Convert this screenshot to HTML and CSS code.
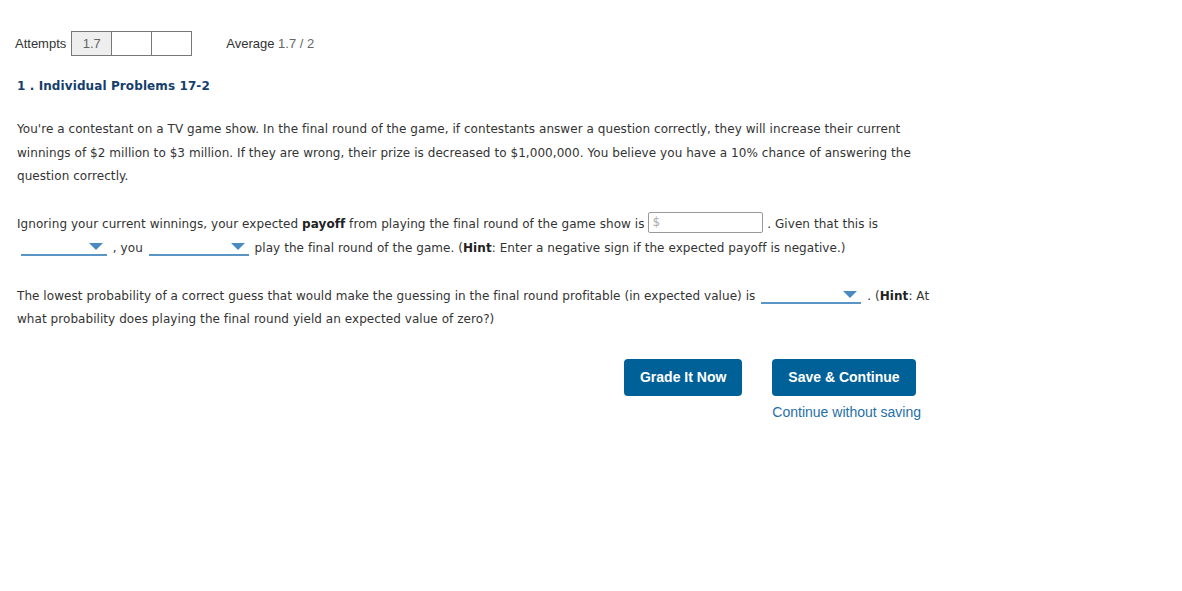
FILE: index.html
```html
<!DOCTYPE html>
<html lang="en">
<head>
  <meta charset="utf-8">
  <title>Individual Problems 17-2</title>
  <link rel="stylesheet" href="styles.css">
</head>
<body>
  <div class="page">
    <div class="attempts">
      <span class="attempts-label">Attempts</span>
      <span class="attempt-boxes">
        <span class="attempt attempt--filled">1.7</span>
        <span class="attempt"></span>
        <span class="attempt"></span>
      </span>
      <span class="average">Average <span class="average-value">1.7 / 2</span></span>
    </div>

    <h2 class="question-title">1 . Individual Problems 17-2</h2>

    <div class="question">
      <p>You're a contestant on a TV game show. In the final round of the game, if contestants answer a question correctly, they will increase their current winnings of $2 million to $3 million. If they are wrong, their prize is decreased to $1,000,000. You believe you have a 10% chance of answering the question correctly.</p>

      <p>Ignoring your current winnings, your expected <strong>payoff</strong> from playing the final round of the game show is <span class="money"><span class="money-sign">$</span></span> . Given that this is <span class="select select--short"><span class="arrow"></span></span> , you <span class="select select--mid"><span class="arrow"></span></span> play the final round of the game. (<strong>Hint</strong>: Enter a negative sign if the expected payoff is negative.)</p>

      <p>The lowest probability of a correct guess that would make the guessing in the final round profitable (in expected value) is <span class="select select--mid"><span class="arrow"></span></span> . (<strong>Hint</strong>: At what probability does playing the final round yield an expected value of zero?)</p>
    </div>

    <div class="actions">
      <button class="btn">Grade It Now</button>
      <div class="save">
        <button class="btn">Save &amp; Continue</button>
        <a class="link" href="#">Continue without saving</a>
      </div>
    </div>
  </div>
</body>
</html>
```

FILE: styles.css
```css
*, *::before, *::after {
  box-sizing: border-box;
}
body {
  margin: 0;
  background: #fff;
  color: #333;
  font-family: "DejaVu Sans", Verdana, sans-serif;
}
.page {
  width: 940px;
  padding: 31px 0 0 15px;
}

/* Attempts row */
.attempts {
  display: flex;
  align-items: center;
  font-family: "Liberation Sans", Arial, sans-serif;
  font-size: 13px;
}
.attempts-label {
  color: #333;
  margin-right: 5px;
}
.attempt-boxes {
  display: flex;
}
.attempt {
  width: 41px;
  height: 25px;
  border: 1px solid #777;
  margin-left: -1px;
  display: flex;
  align-items: center;
  justify-content: center;
  color: #666;
  font-size: 13px;
}
.attempt:first-child {
  margin-left: 0;
}
.attempt--filled {
  background: #eee;
}
.average {
  margin-left: 34px;
  color: #333;
}
.average-value {
  color: #666;
}

/* Question */
.question-title {
  margin: 23px 0 0 2px;
  font-size: 12px;
  font-weight: bold;
  letter-spacing: 0.1px;
  color: #143e6c;
}
.question {
  margin-left: 2px;
  padding-top: 25px;
  font-size: 12px;
  letter-spacing: 0.06px;
  line-height: 23.7px;
}
.question p {
  margin: 0 0 24px;
}
.question strong {
  color: #222;
}
.money {
  display: inline-block;
  vertical-align: middle;
  width: 115px;
  height: 21px;
  border: 1px solid #999;
  border-radius: 2px;
  margin: -4px 0 0 0;
  line-height: 18px;
  padding-left: 3px;
}
.money-sign {
  color: #aaa;
  font-size: 12px;
}
.select {
  display: inline-block;
  position: relative;
  height: 18px;
  vertical-align: -4px;
  border-bottom: 2px solid #5b95c6;
  margin: 0 2px;
}
.select--short {
  width: 86px;
  margin-left: 4px;
}
.select--mid {
  width: 100px;
}
.arrow {
  position: absolute;
  right: 4px;
  top: 5px;
  width: 0;
  height: 0;
  border-left: 7px solid transparent;
  border-right: 7px solid transparent;
  border-top: 7px solid #4a8ac3;
}

/* Actions */
.actions {
  display: flex;
  justify-content: flex-end;
  gap: 30px;
  margin-top: 27px;
  padding-right: 19px;
}
.save {
  display: flex;
  flex-direction: column;
  align-items: flex-start;
}
.btn {
  height: 37px;
  padding: 0 16px;
  border: 0;
  border-radius: 4px;
  background: #006198;
  color: #fff;
  font-family: "Liberation Sans", Arial, sans-serif;
  font-size: 14px;
  font-weight: bold;
}
.link {
  margin-top: 8px;
  color: #1f6fa8;
  text-decoration: none;
  font-family: "Liberation Sans", Arial, sans-serif;
  font-size: 14px;
}
```
